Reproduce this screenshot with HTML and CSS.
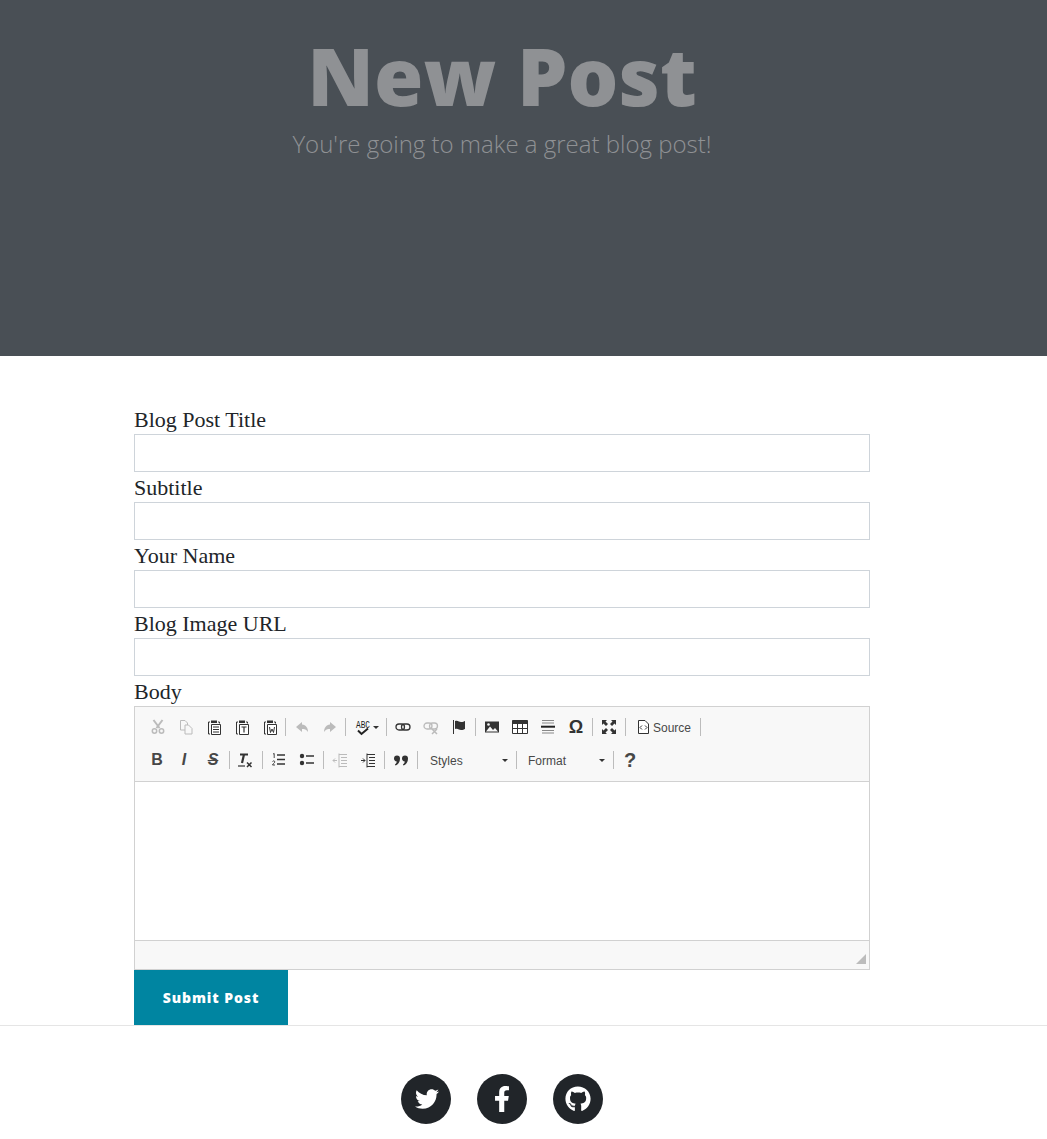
FILE: index.html
```html
<!DOCTYPE html>
<html lang="en">
<head>
    <meta charset="UTF-8">
    <meta name="viewport" content="width=device-width, initial-scale=1.0">
    <title>New Post</title>
    <link rel="stylesheet" href="styles.css">
</head>
<body>
    <header class="masthead">
        <div class="wrap">
            <h1 class="title">New Post</h1>
            <p class="subtitle">You're going to make a great blog post!</p>
        </div>
    </header>

    <main class="wrap post-form">
        <label class="field-label">Blog Post Title</label>
        <input class="field" type="text">
        <label class="field-label">Subtitle</label>
        <input class="field" type="text">
        <label class="field-label">Your Name</label>
        <input class="field" type="text">
        <label class="field-label">Blog Image URL</label>
        <input class="field" type="text">
        <label class="field-label">Body</label>

        <div class="editor">
            <div class="toolbar">
                <div class="tool-row">
                    <span class="tool off"><svg viewBox="0 0 16 16"><path d="M3.500 1L9.500 9M12.500 1L6.500 9" fill="none" stroke="#333" stroke-width="2"/><circle cx="4.500" cy="12" r="2.200" fill="none" stroke="#333" stroke-width="1.500"/><circle cx="11.500" cy="12" r="2.200" fill="none" stroke="#333" stroke-width="1.500"/></svg></span>
                    <span class="tool off"><svg viewBox="0 0 16 16"><path d="M2.500 1.500H7L9.500 4V11H2.500z" fill="none" stroke="#333"/><path d="M7 6H10.500L14 9.500V15H7z" fill="#f8f8f8" stroke="#333"/></svg></span>
                    <span class="tool"><svg viewBox="0 0 16 16"><path d="M4 3H2.500V15H4" fill="none" stroke="#333"/><path d="M5 1.500H11V4H5z" fill="#333"/><path d="M12 3H13.500V4.500" fill="none" stroke="#333"/><path d="M5.500 5.500H14.500V15.500H5.500z" fill="#fff" stroke="#333"/><path d="M7 8H13M7 10.500H13M7 13H13" stroke="#333"/></svg></span>
                    <span class="tool"><svg viewBox="0 0 16 16"><path d="M4 3H2.500V15H4" fill="none" stroke="#333"/><path d="M5 1.500H11V4H5z" fill="#333"/><path d="M12 3H13.500V4.500" fill="none" stroke="#333"/><path d="M5.500 5.500H14.500V15.500H5.500z" fill="#fff" stroke="#333"/><path d="M7.500 8H12.500M10 8V13.500" stroke="#333" stroke-width="1.200"/></svg></span>
                    <span class="tool"><svg viewBox="0 0 16 16"><path d="M4 3H2.500V15H4" fill="none" stroke="#333"/><path d="M5 1.500H11V4H5z" fill="#333"/><path d="M12 3H13.500V4.500" fill="none" stroke="#333"/><path d="M5.500 5.500H14.500V15.500H5.500z" fill="#fff" stroke="#333"/><path d="M7.500 8L8.500 13.500L10 10L11.500 13.500L12.500 8" fill="none" stroke="#333"/></svg></span>
                    <span class="sep"></span>
                    <span class="tool off"><svg viewBox="0 0 16 16"><path d="M8 3L2 8l6 5V10c2.500 0 4.500.5 6 3 0-4-2-7-6-7.500z" fill="#333"/></svg></span>
                    <span class="tool off"><svg viewBox="0 0 16 16"><path d="M8 3l6 5-6 5V10c-2.500 0-4.500.5-6 3 0-4 2-7 6-7.500z" fill="#333"/></svg></span>
                    <span class="sep"></span>
                    <span class="tool tool-spell"><svg class="spell-icon" viewBox="0 0 16 16"><text class="abc" x="1" y="8.500" textLength="14" lengthAdjust="spacingAndGlyphs">ABC</text><path d="M3 11.500L6.500 15L13 9.500" fill="none" stroke="#222" stroke-width="2"/></svg><span class="caret"></span></span>
                    <span class="sep"></span>
                    <span class="tool"><svg viewBox="0 0 16 16"><rect x="1" y="5" width="8.500" height="6" rx="3" fill="none" stroke="#333" stroke-width="1.300"/><rect x="6.500" y="5" width="8.500" height="6" rx="3" fill="none" stroke="#333" stroke-width="1.300"/></svg></span>
                    <span class="tool off"><svg viewBox="0 0 16 16"><rect x="1" y="4" width="8" height="6" rx="3" fill="none" stroke="#333" stroke-width="1.300"/><rect x="6.500" y="4" width="8" height="6" rx="3" fill="none" stroke="#333" stroke-width="1.300"/><path d="M9 10L14 15M14 10L9 15" stroke="#333" stroke-width="1.500"/></svg></span>
                    <span class="tool"><svg viewBox="0 0 16 16"><path d="M2.500 1V15" stroke="#333"/><path d="M4 2c3-1 4 1 6 1s3-.5 4-1v8c-1 .5-2 1-4 1S7 9 4 10z" fill="#333"/></svg></span>
                    <span class="sep sep-end"></span>
                    <span class="tool"><svg viewBox="0 0 16 16"><path d="M1 2.500H15V13.500H1z" fill="#333"/><path d="M2 12.500L6 7.500L9 11L11 9L14 12.500z" fill="#f8f8f8"/><circle cx="4.500" cy="5.500" r="1.300" fill="#f8f8f8"/></svg></span>
                    <span class="tool"><svg viewBox="0 0 16 16"><path d="M.5 1.500H15.500V14.500H.5z" fill="#fff" stroke="#333"/><path d="M.5 1.500H15.500V5H.5z" fill="#333"/><path d="M.5 9.500H15.500M5.500 5V14.500M10.500 5V14.500" stroke="#333"/></svg></span>
                    <span class="tool"><svg viewBox="0 0 16 16"><path d="M2 1.500H14M2 4H14M2 11.500H14M2 14H14" stroke="#888"/><path d="M1 7.700H15" stroke="#222" stroke-width="2"/></svg></span>
                    <span class="tool tool-char">&#937;</span>
                    <span class="sep sep-end"></span>
                    <span class="tool"><svg viewBox="0 0 16 16"><path d="M1 1H6L4.500 2.500 7 5 5 7 2.500 4.500 1 6zM15 1V6L13.500 4.500 11 7 9 5 11.500 2.500 10 1zM1 15V10L2.500 11.500 5 9 7 11 4.500 13.500 6 15zM15 15H10L11.500 13.500 9 11 11 9 13.500 11.500 15 10z" fill="#333"/></svg></span>
                    <span class="sep sep-end"></span>
                    <span class="tool tool-source"><svg viewBox="0 0 16 16"><path d="M3.500 1.500H10L13.500 5V14.500H3.500z" fill="#fff" stroke="#333"/><path d="M7 6.500L5 8.500L7 10.500M10 6.500L12 8.500L10 10.500" fill="none" stroke="#333"/></svg><span class="tool-text">Source</span></span>
                    <span class="sep"></span>
                </div>
                <div class="tool-row">
                    <span class="tool tool-letter bold">B</span>
                    <span class="tool tool-letter italic">I</span>
                    <span class="tool tool-letter strike">S</span>
                    <span class="sep"></span>
                    <span class="tool tool-clear"><svg viewBox="0 0 16 16"><path d="M3 2.500H11M7 2.500L5 11" stroke="#333" stroke-width="2.200" fill="none"/><path d="M1 14H8" stroke="#333" stroke-width="1.200"/><path d="M10 10.500L14.500 15M14.500 10.500L10 15" stroke="#333" stroke-width="1.500"/></svg></span>
                    <span class="sep sep-end"></span>
                    <span class="tool"><svg viewBox="0 0 16 16"><path d="M6 3H14M6 7.500H14M6 12H14" stroke="#333" stroke-width="1.300"/><path d="M2 2L3.200 1.500V6M1.500 9.500C2 8.500 4 8.700 3.800 10 3.700 11 2 11.500 1.500 13H4" fill="none" stroke="#333" stroke-width=".9"/></svg></span>
                    <span class="tool"><svg viewBox="0 0 16 16"><path d="M7 4H15M7 11H15" stroke="#333" stroke-width="1.300"/><circle cx="3" cy="4" r="2.200" fill="#333"/><circle cx="3" cy="11" r="2.200" fill="#333"/></svg></span>
                    <span class="sep sep-end"></span>
                    <span class="tool off"><svg viewBox="0 0 16 16"><path d="M7 2.500H15M9 5.500H15M9 8.500H15M9 11.500H15M7 14.500H15M7 1.500V15.500" stroke="#333"/><path d="M1 8.500H5M1 8.500L3 6.500M1 8.500L3 10.500" fill="none" stroke="#333"/></svg></span>
                    <span class="tool"><svg viewBox="0 0 16 16"><path d="M7 2.500H15M9 5.500H15M9 8.500H15M9 11.500H15M7 14.500H15M7 1.500V15.500" stroke="#333"/><path d="M1 8.500H5M5 8.500L3 6.500M5 8.500L3 10.500" fill="none" stroke="#333"/></svg></span>
                    <span class="sep sep-end"></span>
                    <span class="tool"><svg viewBox="0 0 16 16"><path d="M1 6.500a3 3 0 1 1 6 0c0 3.500-2 6-4.500 7l-.6-1c1-.7 1.800-1.800 1.900-3.100A3 3 0 0 1 1 6.500zM9 6.500a3 3 0 1 1 6 0c0 3.500-2 6-4.500 7l-.6-1c1-.7 1.800-1.800 1.900-3.100A3 3 0 0 1 9 6.500z" fill="#333"/></svg></span>
                    <span class="sep sep-end"></span>
                    <span class="combo combo-styles">Styles<span class="caret"></span></span>
                    <span class="sep"></span>
                    <span class="combo combo-format">Format<span class="caret"></span></span>
                    <span class="sep"></span>
                    <span class="tool tool-letter help">?</span>
                </div>
            </div>
            <div class="editor-body"></div>
            <div class="editor-foot"><span class="resizer"></span></div>
        </div>

        <button class="submit" type="button">Submit Post</button>
    </main>

    <footer class="footer">
        <div class="wrap socials">
            <a class="social social-twitter" href="#"><svg viewBox="0 0 512 512"><path d="M459.37 151.716c.325 4.548.325 9.097.325 13.645 0 138.72-105.583 298.558-298.558 298.558-59.452 0-114.68-17.219-161.137-47.106 8.447.974 16.568 1.299 25.34 1.299 49.055 0 94.213-16.568 130.274-44.832-46.132-.975-84.792-31.188-98.112-72.772 6.498.974 12.995 1.624 19.818 1.624 9.421 0 18.843-1.3 27.614-3.573-48.081-9.747-84.143-51.98-84.143-102.985v-1.299c13.969 7.797 30.214 12.67 47.431 13.319-28.264-18.843-46.781-51.005-46.781-87.391 0-19.492 5.197-37.36 14.294-52.954 51.655 63.675 129.3 105.258 216.365 109.807-1.624-7.797-2.599-15.918-2.599-24.04 0-57.828 46.782-104.934 104.934-104.934 30.213 0 57.502 12.67 76.67 33.137 23.715-4.548 46.456-13.32 66.599-25.34-7.798 24.366-24.366 44.833-46.132 57.827 21.117-2.273 41.584-8.122 60.426-16.243-14.292 20.791-32.161 39.308-52.628 54.253z"/></svg></a>
            <a class="social social-facebook" href="#"><svg viewBox="0 0 320 512"><path d="M279.14 288l14.22-92.66h-88.91v-60.13c0-25.35 12.42-50.06 52.24-50.06h40.42V6.26S260.43 0 225.36 0c-73.22 0-121.08 44.38-121.08 124.72v70.62H22.89V288h81.39v224h100.17V288z"/></svg></a>
            <a class="social" href="#"><svg viewBox="0 0 496 512"><path d="M165.9 397.4c0 2-2.3 3.6-5.2 3.6-3.3 0-5.6-1.6-5.6-3.6 0-2 2.3-3.6 5.2-3.6 3-.3 5.6 1.3 5.6 3.6zm-31.1-4.5c-.7 2 1.3 4.3 4.3 4.9 2.6 1 5.6 0 6.2-2s-1.3-4.3-4.3-5.2c-2.6-.7-5.5.3-6.2 2.3zm44.2-1.7c-2.9.7-4.9 2.6-4.6 4.9.3 2 2.9 3.3 5.9 2.6 2.9-.7 4.9-2.6 4.6-4.6-.3-1.9-3-3.2-5.9-2.9zM244.8 8C106.1 8 0 113.3 0 252c0 110.9 69.8 205.8 169.5 239.2 12.8 2.3 17.3-5.6 17.3-12.1 0-6.2-.3-40.4-.3-61.4 0 0-70 15-84.7-29.8 0 0-11.4-29.1-27.8-36.6 0 0-22.9-15.7 1.6-15.4 0 0 24.9 2 38.6 25.8 21.9 38.6 58.6 27.5 72.9 20.9 2.3-16 8.8-27.1 16-33.7-55.9-6.2-112.3-14.3-112.3-110.5 0-27.5 7.6-41.3 23.6-58.9-2.6-6.5-11.1-33.3 2.6-67.9 20.9-6.5 69 27 69 27 20-5.6 41.5-8.5 62.8-8.5s42.8 2.9 62.8 8.5c0 0 48.1-33.6 69-27 13.7 34.7 5.2 61.4 2.6 67.9 16 17.7 25.8 31.5 25.8 58.9 0 96.5-58.9 104.2-114.8 110.5 9.2 7.9 17 22.9 17 46.4 0 33.7-.3 75.4-.3 83.6 0 6.5 4.6 14.4 17.3 12.1C428.2 457.8 496 362.9 496 252 496 113.3 383.5 8 244.8 8zM97.2 352.9c-1.3 1-1 3.3.7 5.2 1.6 1.6 3.9 2.3 5.2 1 1.3-1 1-3.3-.7-5.2-1.6-1.6-3.9-2.3-5.2-1zm-10.8-8.1c-.7 1.3.3 2.9 2.3 3.9 1.6 1 3.6.7 4.3-.7.7-1.3-.3-2.9-2.3-3.9-2-.6-3.6-.3-4.3.7zm32.4 35.6c-1.6 1.3-1 4.3 1.3 6.2 2.3 2.3 5.2 2.6 6.5 1 1.3-1.3.7-4.3-1.3-6.2-2.2-2.3-5.2-2.6-6.5-1zm-11.4-14.7c-1.6 1-1.6 3.6 0 5.9 1.6 2.3 4.3 3.3 5.6 2.3 1.6-1.3 1.6-3.9 0-6.2-1.4-2.3-4-3.3-5.6-2z"/></svg></a>
        </div>
    </footer>
</body>
</html>
```
FILE: styles.css
```css
*{
    box-sizing: border-box;
}
body{
    margin: 0;
    font-family: "Liberation Serif", serif;
    color: #212529;
    background: #fff;
}
.wrap{
    width: 736px;
    margin-left: 134px;
}

/* header */
.masthead{
    height: 356px;
    padding-top: 27px;
    background-color: #494f55;
    text-align: center;
    font-family: "Open Sans", sans-serif;
}
.title{
    margin: 0;
    font-size: 80px;
    font-weight: 800;
    line-height: 96px;
    color: #8f9194;
}
.subtitle{
    margin: 5px 0 0;
    font-size: 24px;
    font-weight: 300;
    line-height: 32px;
    color: #8f9194;
}

/* form */
.post-form{
    padding-top: 48px;
}
.field-label{
    display: block;
    height: 30px;
    padding-top: 2px;
    font-size: 22px;
    line-height: 27px;
}
.field{
    display: block;
    width: 100%;
    height: 38px;
    margin: 0;
    border: 1px solid #ced4da;
    background: #fff;
}

/* editor */
.editor{
    height: 264px;
    border: 1px solid #d1d1d1;
    display: flex;
    flex-direction: column;
}
.toolbar{
    height: 75px;
    padding: 6px 0 0 9px;
    background: #f8f8f8;
    border-bottom: 1px solid #d1d1d1;
}
.tool-row{
    display: flex;
    height: 28px;
    margin-bottom: 5px;
    align-items: center;
}
.tool{
    display: flex;
    width: 28px;
    height: 28px;
    flex: none;
    align-items: center;
    justify-content: center;
    color: #333;
}
.tool svg{
    width: 16px;
    height: 16px;
}
.off{
    opacity: .3;
}
.sep{
    width: 1px;
    height: 18px;
    flex: none;
    margin: 0 2px 0 1px;
    background: #bcbcbc;
}
.sep-end{
    margin-left: 2px;
}
.tool-spell{
    width: 37px;
    gap: 2px;
}
.tool .spell-icon{
    flex: none;
    overflow: visible;
}
.abc{
    font-family: "Liberation Mono", monospace;
    font-size: 11px;
    fill: #222;
}
.caret{
    display: inline-block;
    flex: none;
    width: 0;
    height: 0;
    border-top: 3px solid #333;
    border-left: 3px solid transparent;
    border-right: 3px solid transparent;
}
.tool-char{
    font-family: "Liberation Sans", sans-serif;
    font-size: 18px;
    font-weight: bold;
}
.tool-source{
    width: auto;
    padding: 0 8px 0 7px;
    gap: 2px;
}
.tool-text,
.combo{
    font-family: "Liberation Sans", sans-serif;
    font-size: 12px;
    color: #484848;
}
.tool-text{
    padding-top: 1px;
}
.tool-letter{
    font-family: "Liberation Sans", sans-serif;
    font-size: 16px;
    font-weight: bold;
    color: #474747;
}
.bold{
    padding-right: 2px;
}
.italic{
    font-style: italic;
    padding-right: 4px;
}
.strike{
    font-style: italic;
    text-decoration: line-through;
    padding-right: 2px;
}
.tool-clear{
    padding-right: 2px;
}
.help{
    font-size: 20px;
}
.combo{
    display: flex;
    height: 28px;
    flex: none;
    align-items: center;
    justify-content: space-between;
    padding: 1px 7px 0 9px;
}
.combo-styles{
    width: 95px;
    padding-left: 10px;
}
.combo-format{
    width: 93px;
}
.editor-body{
    flex: 1;
    background: #fff;
}
.editor-foot{
    position: relative;
    height: 29px;
    flex: none;
    background: #f8f8f8;
    border-top: 1px solid #d1d1d1;
}
.resizer{
    position: absolute;
    right: 3px;
    bottom: 5px;
    width: 0;
    height: 0;
    border-bottom: 10px solid #bcbcbc;
    border-left: 10px solid transparent;
}
.submit{
    display: block;
    width: 154px;
    height: 55px;
    padding: 0;
    border: 0;
    background: #0085a1;
    color: #fff;
    font-family: "Open Sans", sans-serif;
    font-size: 14px;
    font-weight: 800;
    letter-spacing: .9px;
}

/* footer */
.footer{
    padding: 48px 0 15px;
    border-top: 1px solid #e5e5e5;
}
.socials{
    display: flex;
    justify-content: center;
    gap: 26px;
}
.social{
    display: flex;
    width: 50px;
    height: 50px;
    align-items: center;
    justify-content: center;
    border-radius: 50%;
    background: #212529;
}
.social svg{
    height: 26px;
    width: 26px;
    fill: #fff;
}
.social-twitter svg{
    width: 24px;
    height: 24px;
    margin-left: 1px;
}
.social-facebook svg{
    margin-right: 1px;
}
```
